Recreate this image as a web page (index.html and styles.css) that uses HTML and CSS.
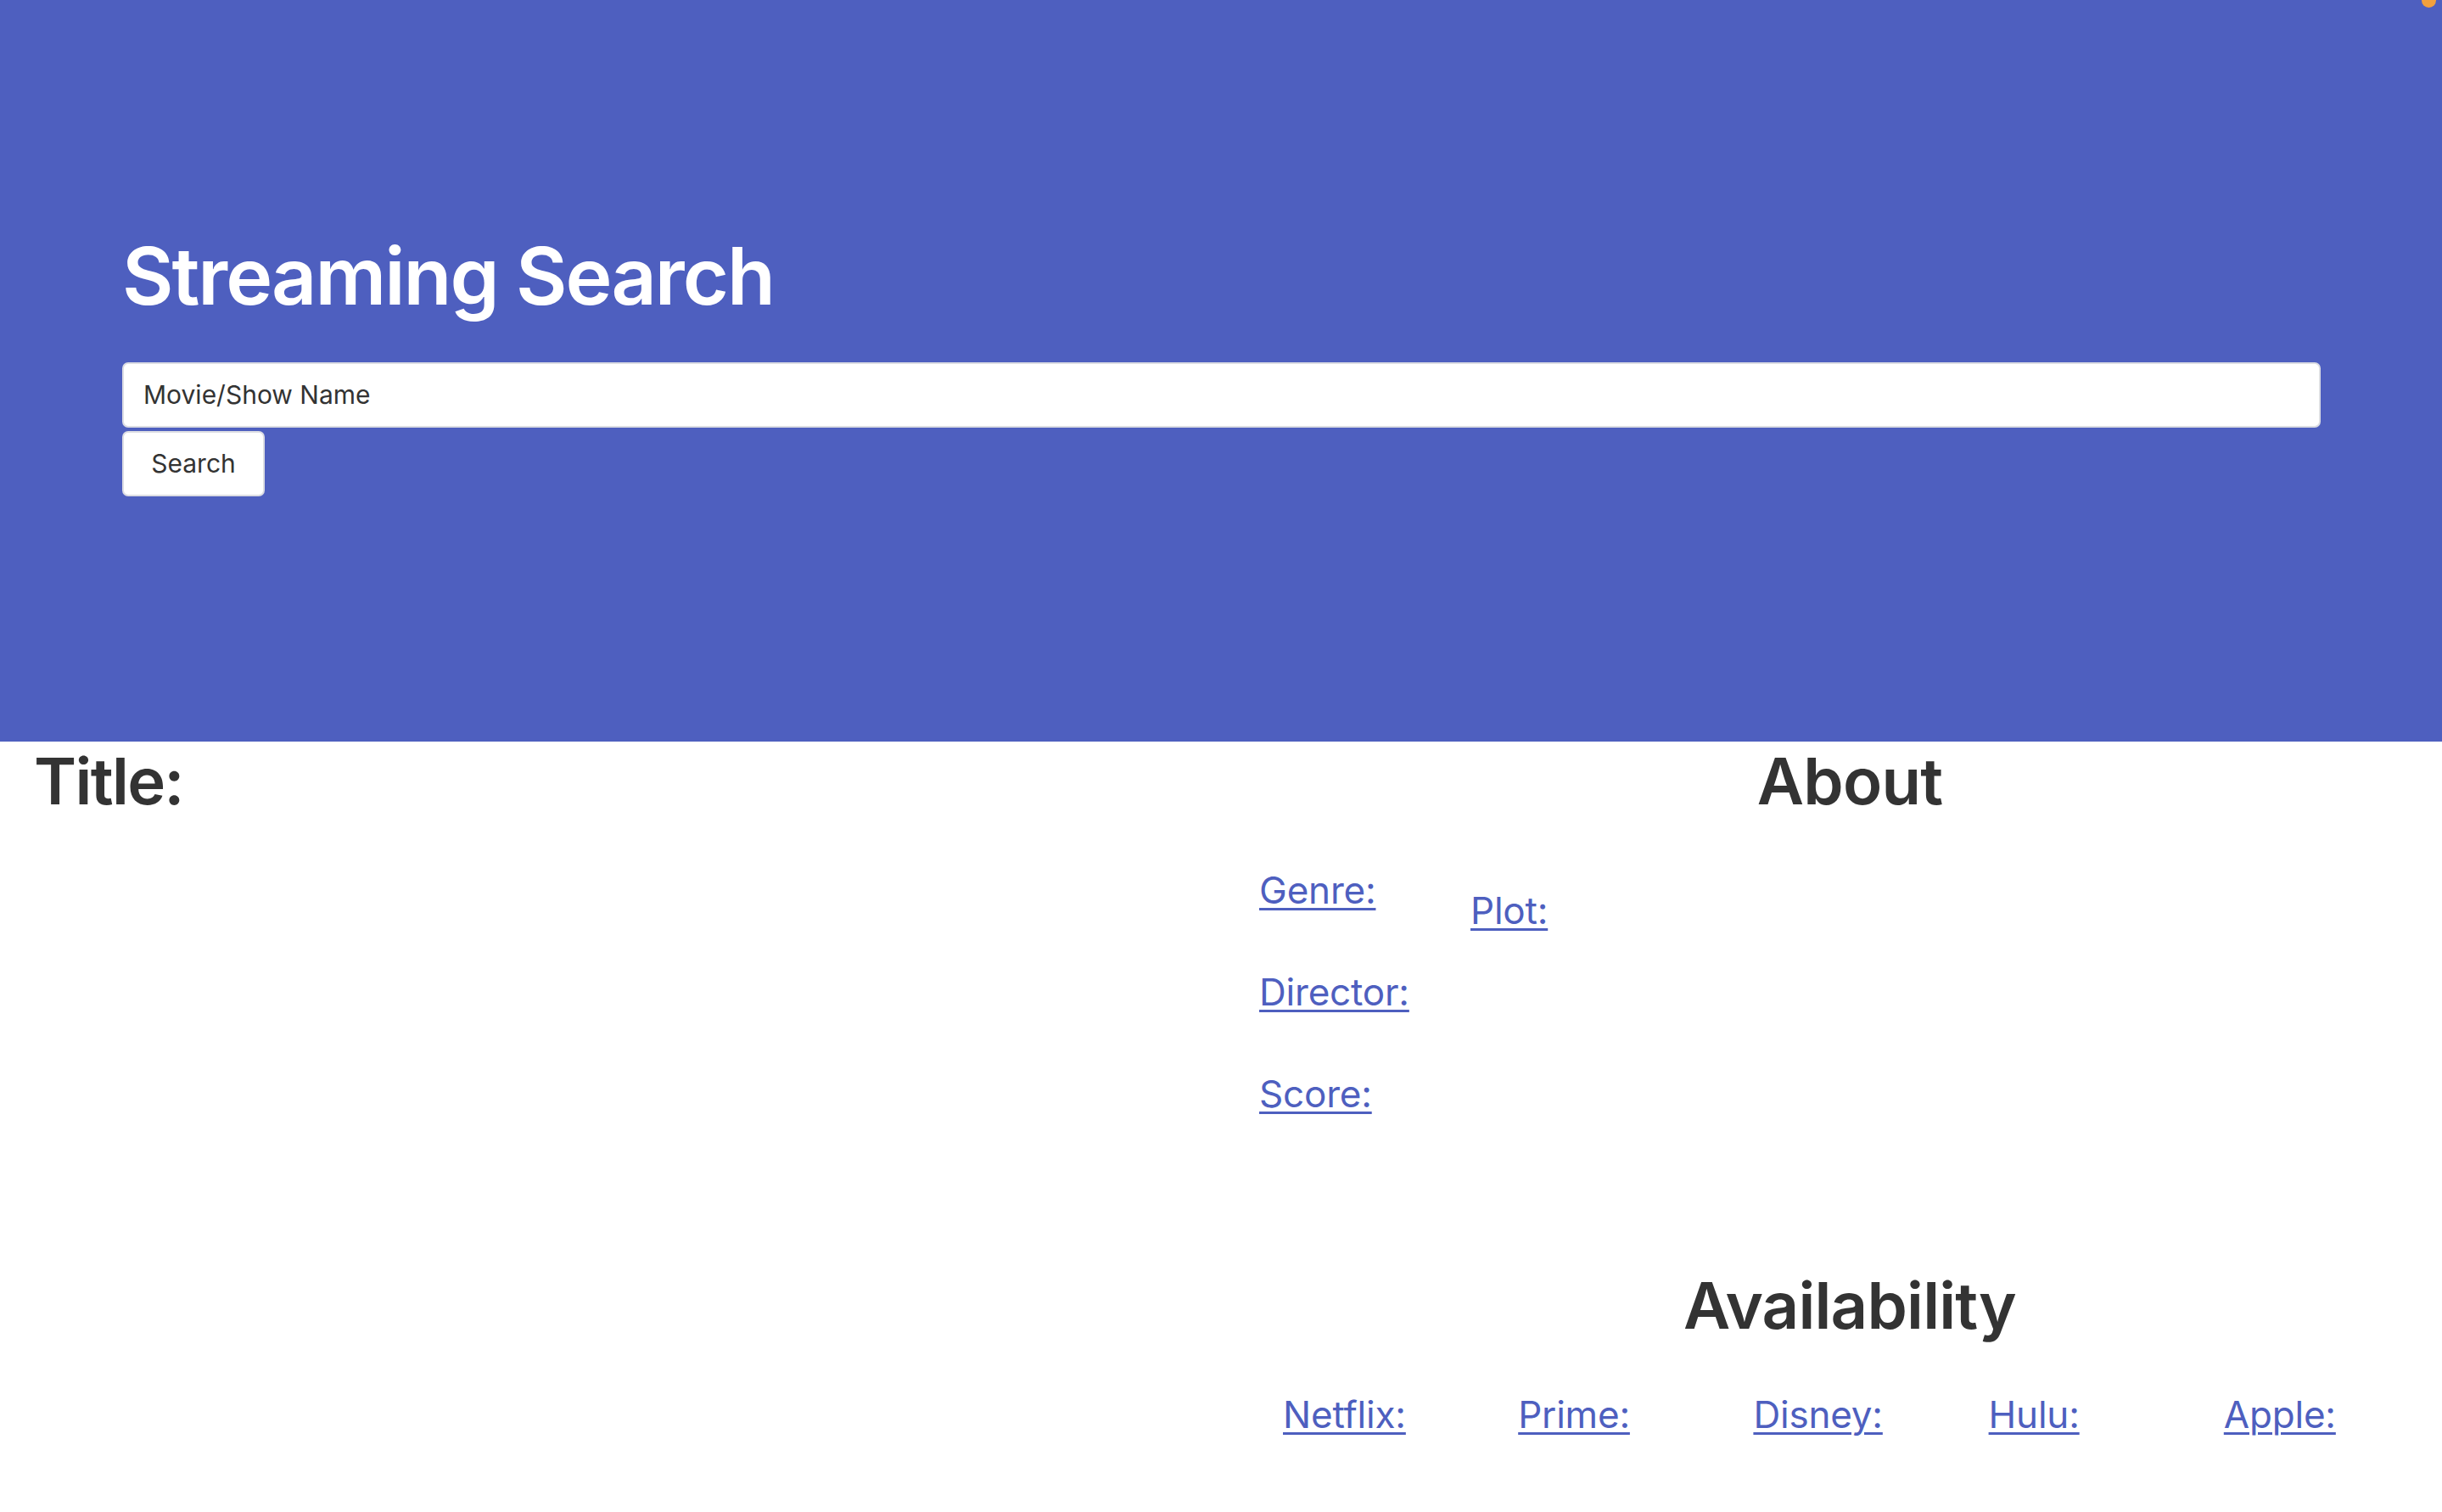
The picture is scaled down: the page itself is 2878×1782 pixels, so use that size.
FILE: index.html
```html
<!DOCTYPE html>
<html lang="en">
<head>
<meta charset="utf-8">
<title>Streaming Search</title>
<link rel="stylesheet" href="styles.css">
</head>
<body>
<span class="dot"></span>
<header class="hero">
  <h1 class="hero-title">Streaming Search</h1>
  <form class="search">
    <input class="search-input" type="text" placeholder="Movie/Show Name">
    <button class="search-btn" type="button">Search</button>
  </form>
</header>
<main class="results">
  <section class="poster-col">
    <h2 class="section-title title-label">Title:</h2>
  </section>
  <section class="info-col">
    <h2 class="section-title centered">About</h2>
    <div class="details">
      <div class="detail-list">
        <a class="link" href="#">Genre:</a>
        <a class="link" href="#">Director:</a>
        <a class="link" href="#">Score:</a>
      </div>
      <div class="plot">
        <a class="link" href="#">Plot:</a>
      </div>
    </div>
    <h2 class="section-title centered avail-title">Availability</h2>
    <div class="services">
      <div class="service"><a class="link" href="#">Netflix:</a></div>
      <div class="service"><a class="link" href="#">Prime:</a></div>
      <div class="service"><a class="link" href="#">Disney:</a></div>
      <div class="service"><a class="link" href="#">Hulu:</a></div>
      <div class="service"><a class="link" href="#">Apple:</a></div>
    </div>
  </section>
</main>
</body>
</html>
```
FILE: styles.css
```css
* { box-sizing: border-box; }
html, body { margin: 0; padding: 0; }
body {
  font-family: Inter, "Noto Sans", "Liberation Sans", sans-serif;
  color: #333333;
  background: #ffffff;
  width: 2878px;
  min-height: 1782px;
  position: relative;
  overflow: hidden;
}
.dot {
  position: absolute;
  left: 2854px;
  top: -8px;
  width: 17px;
  height: 17px;
  border-radius: 50%;
  background: #f2a03c;
}
.hero {
  background: #4e5fbf;
  height: 874px;
  padding: 270px 143px 0 144px;
}
.hero-title {
  margin: 0 0 45px 0;
  font-size: 93px;
  line-height: 1.2;
  font-weight: 600;
  color: #ffffff;
  letter-spacing: -2px;
}
.search {
  display: flex;
  flex-direction: column;
  align-items: flex-start;
  gap: 4px;
  margin: 0;
}
.search-input {
  width: 100%;
  height: 77px;
  border: 2px solid #dcdde3;
  border-radius: 7px;
  background: #ffffff;
  padding: 0 23px;
  font-family: inherit;
  font-size: 30px;
  color: #333333;
  outline: none;
}
.search-input::placeholder { color: #333333; opacity: 1; }
.search-btn {
  width: 168px;
  height: 77px;
  border: 2px solid #dcdde3;
  border-radius: 7px;
  background: #ffffff;
  font-family: inherit;
  font-size: 30px;
  color: #333333;
  padding: 0;
}
.results {
  display: grid;
  grid-template-columns: 1482px 1fr;
}
.poster-col {
  padding-left: 40px;
}
.section-title {
  margin: 1px 0 0 0;
  font-size: 76px;
  line-height: 1.2;
  font-weight: 600;
  color: #333333;
  letter-spacing: -0.8px;
}
.title-label { letter-spacing: -1.7px; }
.centered { text-align: center; }
.info-col {
  display: flex;
  flex-direction: column;
}
.details {
  display: grid;
  grid-template-columns: 249px 1fr;
  margin-top: 57px;
  padding-left: 2px;
}
.detail-list {
  display: flex;
  flex-direction: column;
  align-items: flex-start;
  gap: 67px;
}
.plot {
  padding-top: 24px;
}
.link {
  font-size: 44px;
  line-height: 1.2;
  color: #4e5fbf;
  text-decoration: underline;
  text-decoration-thickness: 3px;
  text-underline-offset: 5px;
  letter-spacing: -0.2px;
}
.avail-title {
  margin-top: 177px;
}
.services {
  display: grid;
  grid-template-columns: repeat(5, 1fr);
  margin-top: 57px;
  padding-left: 10px;
}
.service {
  padding: 0 20px;
}
```
